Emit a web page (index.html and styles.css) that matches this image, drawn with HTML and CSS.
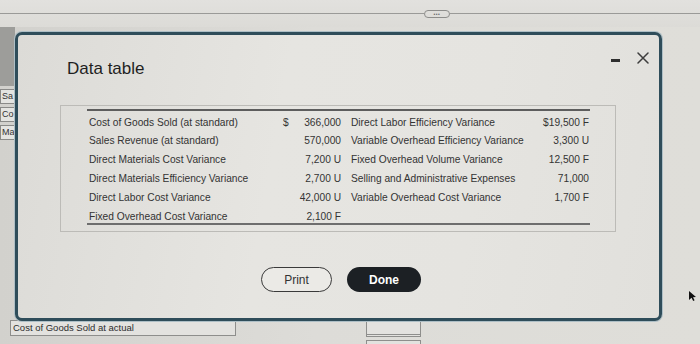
FILE: index.html
```html
<!DOCTYPE html>
<html lang="en">
<head>
<meta charset="utf-8">
<title>Data table</title>
<link rel="stylesheet" href="styles.css">
</head>
<body>
<div class="page">
  <div class="topbar">
    <span class="rule rule-left"></span>
    <span class="handle">•••</span>
    <span class="rule"></span>
  </div>
  <div class="content">
    <div class="side">
      <div class="side-dark"></div>
      <div class="side-field">Sa</div>
      <div class="side-field">Co</div>
      <div class="side-field">Ma</div>
    </div>
    <div class="stub"></div>
  </div>
  <div class="bottom">
    <div class="field-wide">Cost of Goods Sold at actual</div>
    <div class="field-stack">
      <div class="field-small"></div>
      <div class="field-small"></div>
    </div>
  </div>
</div>

<div class="modal">
  <div class="modal-head">
    <h1 class="title">Data table</h1>
    <div class="controls">
      <span class="minimize"></span>
      <svg class="close" width="12" height="12" viewBox="0 0 12 12"><path d="M1 1 L11 11 M11 1 L1 11" stroke="#3d3d3d" stroke-width="1.5" fill="none" stroke-linecap="round"/></svg>
    </div>
  </div>
  <div class="table-box">
    <table class="data">
      <tr><td class="l1">Cost of Goods Sold (at standard)</td><td class="cur">$</td><td class="v1">366,000</td><td class="l2">Direct Labor Efficiency Variance</td><td class="v2">$19,500 F</td></tr>
      <tr><td class="l1">Sales Revenue (at standard)</td><td class="cur"></td><td class="v1">570,000</td><td class="l2">Variable Overhead Efficiency Variance</td><td class="v2">3,300 U</td></tr>
      <tr><td class="l1">Direct Materials Cost Variance</td><td class="cur"></td><td class="v1">7,200 U</td><td class="l2">Fixed Overhead Volume Variance</td><td class="v2">12,500 F</td></tr>
      <tr><td class="l1">Direct Materials Efficiency Variance</td><td class="cur"></td><td class="v1">2,700 U</td><td class="l2">Selling and Administrative Expenses</td><td class="v2">71,000</td></tr>
      <tr><td class="l1">Direct Labor Cost Variance</td><td class="cur"></td><td class="v1">42,000 U</td><td class="l2">Variable Overhead Cost Variance</td><td class="v2">1,700 F</td></tr>
      <tr><td class="l1">Fixed Overhead Cost Variance</td><td class="cur"></td><td class="v1">2,100 F</td><td class="l2"></td><td class="v2"></td></tr>
    </table>
  </div>
  <div class="actions">
    <button class="btn btn-print">Print</button>
    <button class="btn btn-done">Done</button>
  </div>
</div>

<svg class="cursor" width="9" height="12" viewBox="0 0 9 12"><path d="M1 1 L1 10 L3.5 7.8 L5.2 11 L6.6 10.3 L5 7.2 L8 7 Z" fill="#111"/></svg>
</body>
</html>
```
FILE: styles.css
```css
* { box-sizing: border-box; }

html, body {
  margin: 0;
  padding: 0;
}

body {
  width: 700px;
  height: 344px;
  overflow: hidden;
  position: relative;
  font-family: "Liberation Sans", Arial, sans-serif;
  background: linear-gradient(90deg, #d2d1cd 0%, #dddcd8 45%, #dfded9 100%);
  color: #2b2b2b;
}

.page {
  display: flex;
  flex-direction: column;
  height: 344px;
}

.topbar {
  height: 27px;
  display: flex;
  align-items: center;
  background: linear-gradient(180deg, #e2e1de 0%, #dcdbd7 100%);
}

.rule {
  flex: 1;
  height: 1px;
  background: #9a9a98;
}

.rule-left {
  flex: 0 0 424px;
}

.handle {
  width: 26px;
  height: 8px;
  border: 1px solid #8d8d8b;
  border-radius: 4px;
  font-size: 5px;
  line-height: 6px;
  text-align: center;
  color: #666;
  letter-spacing: 0.5px;
}

.content {
  height: 293px;
  display: flex;
}

.side {
  width: 18px;
  display: flex;
  flex-direction: column;
  gap: 3px;
}

.side-dark {
  height: 59px;
  width: 15px;
  background: #9d9d9a;
}

.side-field {
  height: 15px;
  border: 1px solid #8a8a88;
  background: #e4e4e1;
  font-size: 9px;
  line-height: 13px;
  padding-left: 1px;
  color: #333;
}

.stub {
  margin: 4px 0 0 332px;
  width: 80px;
  height: 3px;
  background: #b9b8b4;
}

.bottom {
  height: 24px;
  display: flex;
  align-items: flex-start;
  padding-left: 10px;
}

.field-wide {
  width: 226px;
  height: 16px;
  border: 1px solid #8e8e8c;
  background: #e3e2df;
  font-size: 9.5px;
  line-height: 14px;
  padding-left: 2px;
  color: #2d2d2d;
}

.field-stack {
  margin-left: 130px;
  display: flex;
  flex-direction: column;
  gap: 3px;
}

.field-small {
  width: 55px;
  height: 17px;
  border: 1px solid #8e8e8c;
  border-bottom: 3px double #8e8e8c;
  background: #e3e2df;
}

/* Modal overlay */
.modal {
  position: absolute;
  left: 15px;
  top: 32px;
  width: 647px;
  height: 289px;
  border: 3px solid #2f4d5a;
  border-radius: 7px;
  box-shadow: 0 0 0 1px #aebfc6;
  background: linear-gradient(100deg, #dcdbd7 0%, #e6e5e1 40%, #e5e4e0 70%, #e1e0dc 100%);
  z-index: 2;
}

.modal-head {
  height: 70px;
  display: flex;
  justify-content: space-between;
  align-items: flex-start;
  padding: 0 10px 0 49px;
}

.title {
  margin: 24px 0 0;
  font-size: 17px;
  line-height: 20px;
  font-weight: normal;
  color: #1f1f1f;
}

.controls {
  margin-top: 17px;
  display: flex;
  align-items: flex-start;
  gap: 17px;
}

.minimize {
  margin-top: 7px;
  width: 9px;
  height: 3px;
  background: #2e2e2e;
}

.close {
  display: block;
}

.table-box {
  margin-left: 42px;
  width: 556px;
  height: 127px;
  border: 1px solid #bcbbb7;
  padding: 3px 26px 0 26px;
}

.data {
  width: 503px;
  border-collapse: collapse;
  table-layout: fixed;
  border-top: 2px solid #5d5d5d;
  border-bottom: 2px solid #6e6e6e;
  font-size: 10.2px;
  color: #333;
}

.data td {
  height: 19px;
  padding: 4px 0 0;
  white-space: nowrap;
}

.l1 { width: 190px; padding-left: 2px !important; }
.cur { width: 20px; padding-left: 6px !important; }
.v1 { width: 46px; text-align: right; padding-right: 2px !important; }
.l2 { width: 172px; padding-left: 8px !important; }
.v2 { width: 75px; text-align: right; padding-right: 1px !important; }

.actions {
  margin-top: 35px;
  display: flex;
  justify-content: center;
  gap: 15px;
  padding-left: 5px;
}

.btn {
  height: 25px;
  border-radius: 13px;
  font-family: "Liberation Sans", Arial, sans-serif;
  font-size: 12px;
  padding: 0;
}

.btn-print {
  width: 71px;
  border: 1.5px solid #3a3a3a;
  background: #ebeae6;
  color: #333;
}

.btn-done {
  width: 74px;
  border: none;
  background: #1c2024;
  color: #fff;
  font-weight: bold;
}

.cursor {
  position: absolute;
  left: 688px;
  top: 290px;
  z-index: 3;
}
```
